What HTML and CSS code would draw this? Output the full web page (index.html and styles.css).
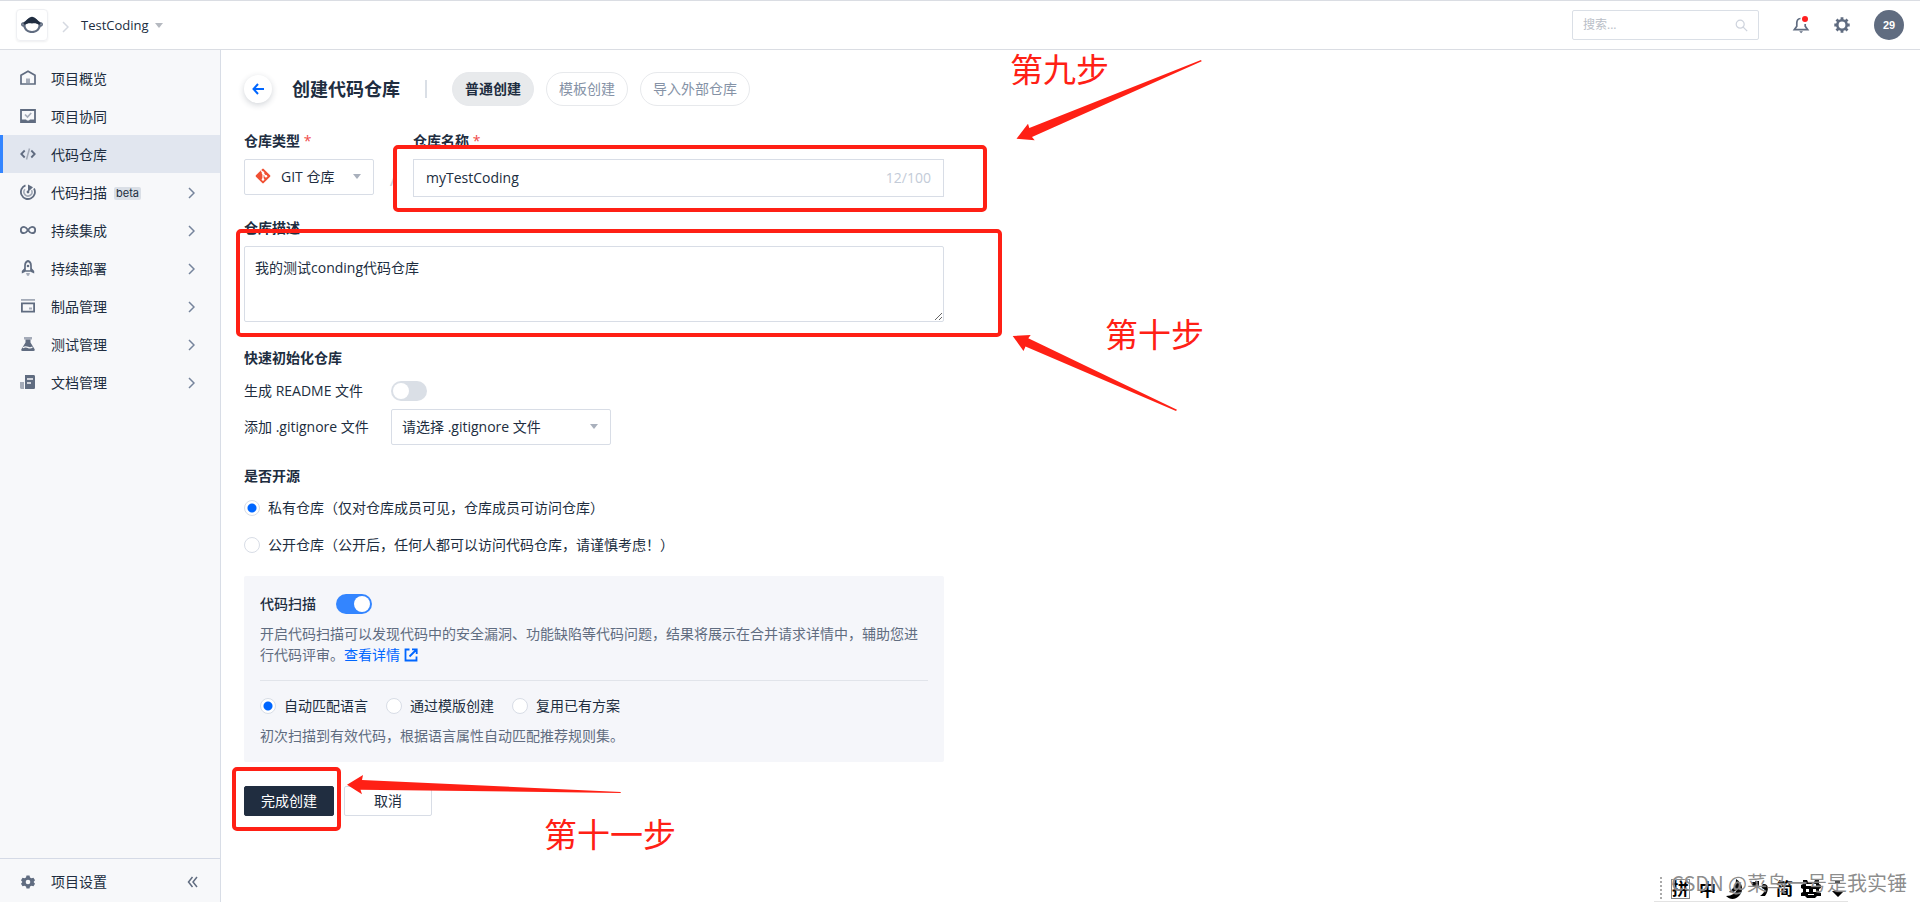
FILE: index.html
```html
<!DOCTYPE html>
<html lang="zh-CN">
<head>
<meta charset="utf-8">
<meta name="viewport" content="width=device-width, initial-scale=1">
<title>创建代码仓库</title>
<link rel="stylesheet" href="styles.css">
</head>
<body>
<header class="topbar">
  <a class="logo" href="#" aria-label="首页">
    <svg width="24" height="18" viewBox="0 0 24 18"><path d="M4 6C6.500 4.500 8 2 12 .8 16 2 17.500 4.500 20 6c2 0 3 1 3 2.300 0 1.400-1 2.300-2.300 2.400C19.500 14.500 16.500 17 12 17s-7.500-2.500-8.700-6.300C2 10.600 1 9.700 1 8.300 1 7 2 6 4 6Z" fill="#606c80"/><path d="M4 6.500C6.500 4.500 8 2 12 .8 16 2 17.500 4.500 20 6.500l1 2H3z" fill="#202d40"/><path d="M5.600 8.800c1.600-1.500 3.800-1.900 6.400-1.200 2.600-.7 4.800-.3 6.400 1.200.4 3.700-2.400 6.200-6.400 6.200s-6.800-2.500-6.400-6.200Z" fill="#fff"/><circle cx="3" cy="8.300" r=".9" fill="#8c95a3"/><circle cx="21" cy="8.300" r=".9" fill="#8c95a3"/></svg>
  </a>
  <svg class="crumb-arrow" width="7" height="12" viewBox="0 0 7 12"><path d="M1 1l5 5-5 5" fill="none" stroke="#d5d9e1" stroke-width="1.500"/></svg>
  <button class="project" type="button">TestCoding
    <svg width="8" height="5" viewBox="0 0 8 5"><path d="M0 0h8L4 5z" fill="#b5b9c0"/></svg>
  </button>
  <div class="tools">
    <label class="search">
      <input type="text" placeholder="搜索..." aria-label="搜索">
      <svg width="13" height="13" viewBox="0 0 13 13"><g fill="none" stroke="#ced3dd" stroke-width="1.200"><circle cx="5.200" cy="5.200" r="4"/><path d="M8.200 8.200l4 4"/></g></svg>
    </label>
    <button class="tool" type="button" aria-label="通知">
      <svg width="18" height="18" viewBox="0 0 18 18"><path d="M8.500 2.500C5.700 2.700 4.800 4.800 4.800 7v3.200L2.300 13.700h13.400L13.200 10.200V8" fill="none" stroke="#606c80" stroke-width="1.700"/><path d="M7.200 15.300h3.800L9.100 17.200z" fill="#606c80"/><circle cx="13" cy="3" r="3" fill="#ff1f1f"/></svg>
    </button>
    <button class="tool" type="button" aria-label="设置">
      <svg width="16" height="16" viewBox="0 0 16 16"><g fill="none" stroke="#606c80"><circle cx="8" cy="8" r="4.700" stroke-width="2.600"/><path d="M8 .3v3M8 12.700v3M.3 8h3M12.700 8h3M2.500 2.500l2 2M11.500 11.500l2 2M2.500 13.500l2-2M11.500 4.500l2-2" stroke-width="2.800"/></g></svg>
    </button>
    <button class="avatar" type="button">29</button>
  </div>
</header>

<div class="body">
  <nav class="sidebar" aria-label="项目">
    <ul class="menu">
      <li><a class="item" href="#"><svg class="icon" viewBox="0 0 16 16"><path d="M1 5.200 8 1.200l7 4V14H1z" fill="none" stroke="#606c80" stroke-width="1.700"/><path d="M6 8.500h4V13H6z" fill="#a4abb8"/></svg><span>项目概览</span></a></li>
      <li><a class="item" href="#"><svg class="icon" viewBox="0 0 16 16"><path d="M1 2h14v12H1z" fill="none" stroke="#606c80" stroke-width="1.800"/><path d="M1 11.500h5l1 1h2l1-1h5V15H1z" fill="#606c80"/><path d="M5 6.500l2.500 2.500L11.200 5" fill="none" stroke="#a4abb8" stroke-width="1.700"/></svg><span>项目协同</span></a></li>
      <li><a class="item active" href="#" aria-current="page"><svg class="icon" viewBox="0 0 16 16"><path d="M4.700 4.500 1.300 8l3.400 3.500M11.300 4.500 14.700 8l-3.400 3.500" fill="none" stroke="#606c80" stroke-width="1.800"/><path d="M9.500 2.500l-3 11" stroke="#a4abb8" stroke-width="1.500"/></svg><span>代码仓库</span></a></li>
      <li><a class="item" href="#"><svg class="icon" viewBox="0 0 16 16"><path d="M5.500 1.400A7 7 0 1 0 14 4.500" fill="none" stroke="#606c80" stroke-width="1.800"/><path d="M5 5.300a4 4 0 1 0 6.500.8" fill="none" stroke="#a4abb8" stroke-width="1.600"/><path d="M8 8V.6l5 2.600z" fill="#606c80"/><circle cx="8" cy="8" r="1.400" fill="#606c80"/></svg><span>代码扫描</span><span class="beta">beta</span><svg class="more" viewBox="0 0 7 12"><path d="M1 1l5 5-5 5"/></svg></a></li>
      <li><a class="item" href="#"><svg class="icon" viewBox="0 0 16 16"><path d="M8 8C6.500 5.700 5.500 4.800 4 4.800a3.200 3.200 0 0 0 0 6.400C5.500 11.200 6.500 10.300 8 8s2.500-3.200 4-3.200a3.200 3.200 0 0 1 0 6.400C10.500 11.200 9.500 10.300 8 8Z" fill="none" stroke="#606c80" stroke-width="1.800"/></svg><span>持续集成</span><svg class="more" viewBox="0 0 7 12"><path d="M1 1l5 5-5 5"/></svg></a></li>
      <li><a class="item" href="#"><svg class="icon" viewBox="0 0 16 16"><path d="M5 11V5.500C5 3.300 6.500 1.500 8 .9c1.500.6 3 2.400 3 4.600V11z" fill="none" stroke="#606c80" stroke-width="1.700"/><path d="M5 7.500 1.800 11v2.500L5 12zM11 7.500l3.200 3.500v2.500L11 12z" fill="#606c80"/><circle cx="8" cy="6" r="1.300" fill="#606c80"/><path d="M6 13h4l-1 2.800H7z" fill="#a4abb8"/></svg><span>持续部署</span><svg class="more" viewBox="0 0 7 12"><path d="M1 1l5 5-5 5"/></svg></a></li>
      <li><a class="item" href="#"><svg class="icon" viewBox="0 0 16 16"><path d="M1 1h14v1.800H1z" fill="#a4abb8"/><path d="M1.900 5.300h12.200v8.300H1.900z" fill="none" stroke="#606c80" stroke-width="1.800"/><path d="M9 9.500h3v2H9z" fill="#a4abb8"/></svg><span>制品管理</span><svg class="more" viewBox="0 0 7 12"><path d="M1 1l5 5-5 5"/></svg></a></li>
      <li><a class="item" href="#"><svg class="icon" viewBox="0 0 16 16"><path d="M4 1h8v2.500H4z" fill="#a4abb8"/><path d="M5.500 3.500h5v3l4 6.500c.6 1.200.2 2-1 2H2.500c-1.200 0-1.600-.8-1-2l4-6.500z" fill="#606c80"/><path d="M2.800 11.800c2-1.200 3.600-1.200 5.200-.4s3 .6 4.500-.3" fill="none" stroke="#f7f8fa" stroke-width="1.200"/></svg><span>测试管理</span><svg class="more" viewBox="0 0 7 12"><path d="M1 1l5 5-5 5"/></svg></a></li>
      <li><a class="item" href="#"><svg class="icon" viewBox="0 0 16 16"><path d="M0 8h4v7H1.500C.6 15 0 14.400 0 13.500z" fill="#a4abb8"/><path d="M5 1h8.500c1 0 1.500.6 1.500 1.500v11c0 1-.6 1.500-1.500 1.500H5z" fill="#606c80"/><path d="M7 5h6M7 9h4" stroke="#f7f8fa" stroke-width="1.600"/></svg><span>文档管理</span><svg class="more" viewBox="0 0 7 12"><path d="M1 1l5 5-5 5"/></svg></a></li>
    </ul>
    <div class="settings">
      <a class="item" href="#"><svg class="icon" viewBox="0 0 16 16"><path d="M6.500 1.500h3l.5 2 1.500.8 2-.5 1.500 2.500L13.600 8l1.400 1.700-1.500 2.500-2-.5-1.500.8-.5 2h-3l-.5-2-1.500-.8-2 .5L1 9.700 2.400 8 1 6.300l1.500-2.500 2 .5L6 3.500z" fill="#606c80"/><circle cx="8" cy="8" r="2.300" fill="#f7f8fa"/></svg><span>项目设置</span></a>
      <button class="fold" type="button" aria-label="收起"><svg width="11" height="12" viewBox="0 0 11 12"><path d="M5.500 1l-4 5 4 5M10 1L6 6l4 5" fill="none" stroke="#606c80" stroke-width="1.500"/></svg></button>
    </div>
  </nav>

  <main class="main">
    <div class="title-row">
      <a class="back" href="#" aria-label="返回"><svg width="13" height="12" viewBox="0 0 13 12"><path d="M6 1L1.500 6 6 11M1.500 6H12" fill="none" stroke="#06f" stroke-width="2"/></svg></a>
      <h1 class="title">创建代码仓库</h1>
      <span class="split"></span>
      <div class="tabs">
        <button class="tab current" type="button">普通创建</button>
        <button class="tab" type="button">模板创建</button>
        <button class="tab" type="button">导入外部仓库</button>
      </div>
    </div>

    <form class="form">
      <div class="name-row">
        <div class="field">
          <label class="label" for="kind">仓库类型 <span class="star">*</span></label>
          <div class="pick kind">
            <svg class="git" width="16" height="16" viewBox="0 0 16 16"><rect x="2.500" y="2.500" width="11" height="11" rx="1" transform="rotate(45 8 8)" fill="#f05033"/><path d="M6 2.500l2 2v7M8.300 5.500l2.400 2.600" fill="none" stroke="#fff" stroke-width="1.200"/><g fill="#fff"><circle cx="8" cy="4.900" r="1.300"/><circle cx="8" cy="11.500" r="1.300"/><circle cx="10.900" cy="8.200" r="1.300"/></g></svg>
            <select id="kind"><option>GIT 仓库</option></select>
            <svg class="caret" width="8" height="5" viewBox="0 0 8 5"><path d="M0 0h8L4 5z"/></svg>
          </div>
        </div>
        <span class="slash">/</span>
        <div class="field grow">
          <label class="label" for="name">仓库名称 <span class="star">*</span></label>
          <div class="name-box">
            <input id="name" type="text" value="myTestCoding">
            <span class="count">12/100</span>
          </div>
        </div>
      </div>

      <div class="field">
        <label class="label" for="desc">仓库描述</label>
        <textarea id="desc">我的测试conding代码仓库</textarea>
      </div>

      <section class="init">
        <h2 class="label">快速初始化仓库</h2>
        <div class="init-row readme">
          <label class="caption" for="readme">生成 README 文件</label>
          <input class="switch" id="readme" type="checkbox" role="switch">
        </div>
        <div class="init-row">
          <label class="caption" for="ignore">添加 .gitignore 文件</label>
          <div class="pick ignore">
            <select id="ignore"><option>请选择 .gitignore 文件</option></select>
            <svg class="caret" width="8" height="5" viewBox="0 0 8 5"><path d="M0 0h8L4 5z"/></svg>
          </div>
        </div>
      </section>

      <fieldset class="open">
        <legend class="label">是否开源</legend>
        <label class="choice"><input type="radio" name="open" checked><span>私有仓库（仅对仓库成员可见，仓库成员可访问仓库）</span></label>
        <label class="choice"><input type="radio" name="open"><span>公开仓库（公开后，任何人都可以访问代码仓库，请谨慎考虑！）</span></label>
      </fieldset>

      <section class="scan">
        <div class="scan-head">
          <label class="label" for="scan">代码扫描</label>
          <input class="switch" id="scan" type="checkbox" role="switch" checked>
        </div>
        <p class="note intro">开启代码扫描可以发现代码中的安全漏洞、功能缺陷等代码问题，结果将展示在合并请求详情中，辅助您进行代码评审。<a class="link" href="#">查看详情 <svg width="14" height="14" viewBox="0 0 14 14"><path d="M5.500 1.500H1.500v11h11v-4M8 1.300h4.700V6M12.500 1.500L5.500 8.500" fill="none" stroke="#06f" stroke-width="1.800"/></svg></a></p>
        <div class="plans">
          <label class="choice"><input type="radio" name="plan" checked><span>自动匹配语言</span></label>
          <label class="choice"><input type="radio" name="plan"><span>通过模版创建</span></label>
          <label class="choice"><input type="radio" name="plan"><span>复用已有方案</span></label>
        </div>
        <p class="note">初次扫描到有效代码，根据语言属性自动匹配推荐规则集。</p>
      </section>

      <div class="actions">
        <button class="btn primary" type="button">完成创建</button>
        <button class="btn" type="button">取消</button>
      </div>
    </form>
  </main>
</div>

<svg class="marks" width="1260" height="860" viewBox="0 0 1260 860">
  <g fill="none" stroke="#ff2015" stroke-width="4">
    <rect x="395" y="147" width="590" height="63" rx="3"/>
    <rect x="238" y="231" width="762" height="104" rx="3"/>
    <rect x="234" y="769" width="105" height="60" rx="3"/>
  </g>
  <g fill="#ff2015">
    <path d="M1016.500 138.700 1028 123.700 1029.300 128 1201 60 1201.700 61.300 1032 137 1034.700 140.300Z"/>
    <path d="M1012.700 336 1030.700 335 1028.300 338.300 1177 409.700 1176 411 1025.500 346.500 1023.500 351Z"/>
    <path d="M347 784.700 363 775 362 780 620.700 792 620.700 793 360.500 789.700 362 794.300Z"/>
    <text class="step" x="1010" y="82">第九步</text>
    <text class="step" x="1105" y="347">第十步</text>
    <text class="step" x="544" y="847">第十一步</text>
  </g>
</svg>

<div class="ime">
  <svg width="196" height="28" viewBox="0 0 196 28">
    <path d="M7 3v22" stroke="#aaa" stroke-width="2" stroke-dasharray="2 2"/>
    <rect x="17.500" y="5.500" width="18" height="19" fill="none" stroke="#888"/>
    <g class="ime-text"><text x="18" y="21">拼</text><text x="45" y="22">中</text><text x="122" y="21">简</text></g>
    <path d="M82 5c7 4 8 12 3 17-4 4-9 4-13 0 6 0 10-3 11-7-2 3-5 4-8 3 4-3 7-7 7-13Z"/>
    <path d="M97 8h5v5h-3zM109 10c5-1 7 5 2 12h-5c4-3 5-5 4-7-3 0-3-4-1-5ZM101 7h4v5h-4z"/>
    <path d="M149 6h4l1 2h6l1-2h4v4l2 1v3l-2 1v3l2 1v3h-4l-2 2h-8l-2-2h-4v-3l2-1v-3l-2-1v-3l2-1z"/>
    <path d="M152 10h10v2h-10zM152 15h3v3h-3zM159 15h3v3h-3zM154 20h6v1h-6z" fill="#fff"/>
    <path d="M181 7h5v2h-5zM178 17h12l-6 6z"/>
    <path d="M0 27.500h194" stroke="#e3e3e3"/>
  </svg>
</div>
<div class="watermark">CSDN @菜鸟一号是我实锤</div>
</body>
</html>
```
FILE: styles.css
```css
* { box-sizing: border-box; }

body {
  margin: 0;
  min-height: 100vh;
  display: flex;
  flex-direction: column;
  position: relative;
  background: #fff;
  color: #202d40;
  font: 14px/20px "Open Sans", "Noto Sans CJK SC", sans-serif;
}

button, input, select, textarea { font: inherit; color: inherit; }
button { cursor: pointer; }
a { color: inherit; text-decoration: none; }
svg { flex: none; }

.topbar {
  display: flex;
  align-items: center;
  height: 50px;
  padding: 0 16px;
  border-top: 1px solid #dadde3;
  border-bottom: 1px solid #dadde3;
}
.logo {
  display: flex;
  align-items: center;
  justify-content: center;
  width: 32px;
  height: 32px;
  border: 1px solid #eff0f3;
  border-radius: 4px;
  box-shadow: 0 1px 2px rgba(32, 45, 64, .08);
}
.crumb-arrow { margin: 3px 12px 0 14px; }
.project {
  display: flex;
  align-items: center;
  gap: 6px;
  padding: 0;
  border: 0;
  background: none;
  font-size: 13px;
}
.tools { display: flex; align-items: center; margin-left: auto; }
.search {
  display: flex;
  align-items: center;
  width: 187px;
  height: 30px;
  margin-right: 33px;
  padding: 0 10px;
  border: 1px solid #dadfe6;
  border-radius: 2px;
}
.search input {
  flex: 1;
  min-width: 0;
  padding: 0;
  border: 0;
  outline: 0;
  background: none;
  font-size: 12px;
}
.search input::placeholder { color: #b9bec7; }
.tool { display: flex; padding: 0; border: 0; background: none; margin-right: 24px; }
.avatar {
  width: 30px;
  height: 30px;
  padding: 0;
  border: 0;
  border-radius: 50%;
  background: #606c80;
  color: #fff;
  font: bold 11px "Liberation Sans", sans-serif;
}

.body { display: flex; flex: 1; }

.sidebar {
  display: flex;
  flex: none;
  flex-direction: column;
  justify-content: space-between;
  width: 221px;
  border-right: 1px solid #d8dde6;
  background: #f7f8fa;
}
.menu { margin: 0; padding: 9px 0; list-style: none; }
.item {
  display: flex;
  align-items: center;
  height: 38px;
  padding: 2px 25px 0 20px;
}
.item.active { padding-left: 17px; border-left: 3px solid #3385ff; background: #e1e6ef; }
.icon { width: 16px; height: 16px; margin-right: 15px; }
.menu .icon { margin-bottom: 2px; }
.beta {
  margin-left: 7px;
  padding: 0 2px;
  border-radius: 2px;
  background: #dadfe6;
  font: 11px/13px Inter, sans-serif;
}
.more { width: 7px; height: 12px; margin-left: auto; fill: none; stroke: #76849c; stroke-width: 1.500; }
.settings {
  display: flex;
  align-items: center;
  justify-content: space-between;
  height: 44px;
  padding-top: 1px;
  border-top: 1px solid #d5dae6;
}
.fold { display: flex; margin-right: 22px; padding: 2px 0 0; border: 0; background: none; }

.main { flex: 1; min-width: 0; padding: 22px 23px; }
.title-row { display: flex; align-items: center; height: 34px; margin-bottom: 25px; }
.back {
  display: flex;
  align-items: center;
  justify-content: center;
  width: 28px;
  height: 28px;
  border-radius: 50%;
  background: #fff;
  box-shadow: 0 2px 6px rgba(32, 45, 64, .2);
}
.title { margin: 0 25px 0 20px; font-size: 18px; font-weight: 700; }
.split { width: 2px; height: 18px; margin-right: 25px; background: #dadfe6; }
.tabs { display: flex; gap: 12px; }
.tab {
  height: 34px;
  padding: 0 12px;
  border: 1px solid #e7e9ec;
  border-radius: 17px;
  background: #fff;
  color: #8592a6;
}
.tab.current { background: #e8eaec; color: #202d40; font-weight: 700; }

.form { max-width: 700px; }
.field { display: flex; flex-direction: column; gap: 8px; }
.label { margin: 0; padding: 0; font-size: 14px; font-weight: 700; }
.star { color: #f04b4b; font-weight: 400; }
.name-row { display: flex; margin-bottom: 21px; }
.grow { flex: 1; }
.slash { width: 39px; padding-top: 38px; color: #ccd2dc; font-size: 20px; text-align: center; }

.pick { position: relative; height: 36px; }
.pick select {
  width: 100%;
  height: 100%;
  padding: 0 10px;
  border: 1px solid #d8dde6;
  border-radius: 2px;
  background: #fff;
  appearance: none;
}
.kind { width: 130px; }
.pick.kind select { padding-left: 36px; }
.git { position: absolute; top: 9px; left: 11px; }
.caret { position: absolute; top: 15px; right: 13px; fill: #a9b0bc; }
.ignore { width: 220px; }

.name-box {
  display: flex;
  align-items: center;
  height: 38px;
  padding: 0 12px;
  border: 1px solid #d8dde6;
}
.name-box input { flex: 1; min-width: 0; padding: 0; border: 0; outline: 0; }
.count { color: #c3cbd8; }
textarea {
  display: block;
  width: 100%;
  height: 76px;
  padding: 11px 10px;
  border: 1px solid #d8dde6;
  border-radius: 2px;
  resize: vertical;
}

.init { margin: 26px 0 21px; }
.init-row { display: flex; align-items: center; }
.readme { margin: 13px 0 8px; }
.caption { width: 147px; }
.switch {
  width: 36px;
  height: 20px;
  margin: 0;
  padding: 2px;
  border-radius: 10px;
  background: #dadfe6;
  appearance: none;
}
.switch::before {
  content: "";
  display: block;
  width: 16px;
  height: 16px;
  border-radius: 50%;
  background: #fff;
}
.switch:checked { background: #3385ff; }
.switch:checked::before { margin-left: auto; }

.open { margin: 0 0 21px; padding: 0; border: 0; }
.choice { display: flex; align-items: center; gap: 8px; }
.open .choice { margin-top: 17px; }
.open .label + .choice { margin-top: 12px; }
.choice input {
  width: 16px;
  height: 16px;
  margin: 0;
  border: 1px solid #d8dde6;
  border-radius: 50%;
  background: #fff;
  appearance: none;
}
.choice input:checked { background: radial-gradient(circle, #06f 4px, #fff 5px); }

.scan { padding: 16px; border-radius: 2px; background: #f5f6fa; }
.scan-head { display: flex; align-items: center; gap: 20px; height: 24px; }
.scan-head .label { font-weight: 500; }
.note { margin: 0; color: #606c80; }
.intro { margin: 7px 0 15px; line-height: 21px; }
.link { color: #06f; }
.link svg { vertical-align: -2px; }
.plans { display: flex; gap: 18px; padding: 15px 0 10px; border-top: 1px solid #e1e4ea; }

.actions { display: flex; gap: 10px; margin-top: 24px; }
.btn {
  width: 88px;
  height: 30px;
  padding: 0;
  border: 1px solid #d8dde6;
  border-radius: 2px;
  background: #fff;
}
.btn.primary { width: 90px; border-color: #202d40; background: #202d40; color: #fff; }

.marks { position: absolute; top: 0; left: 0; pointer-events: none; }
.step { font: 33px "Noto Sans CJK SC", sans-serif; }
.ime { position: absolute; right: 70px; bottom: 0; height: 28px; }
.ime-text { font: bold 17px "Noto Sans CJK SC", sans-serif; }
.watermark {
  position: absolute;
  right: 13px;
  bottom: 5px;
  color: rgba(90, 90, 90, .7);
  font: 20px/28px "Noto Sans CJK SC", sans-serif;
  text-shadow: 0 0 1px #fff;
}
```
